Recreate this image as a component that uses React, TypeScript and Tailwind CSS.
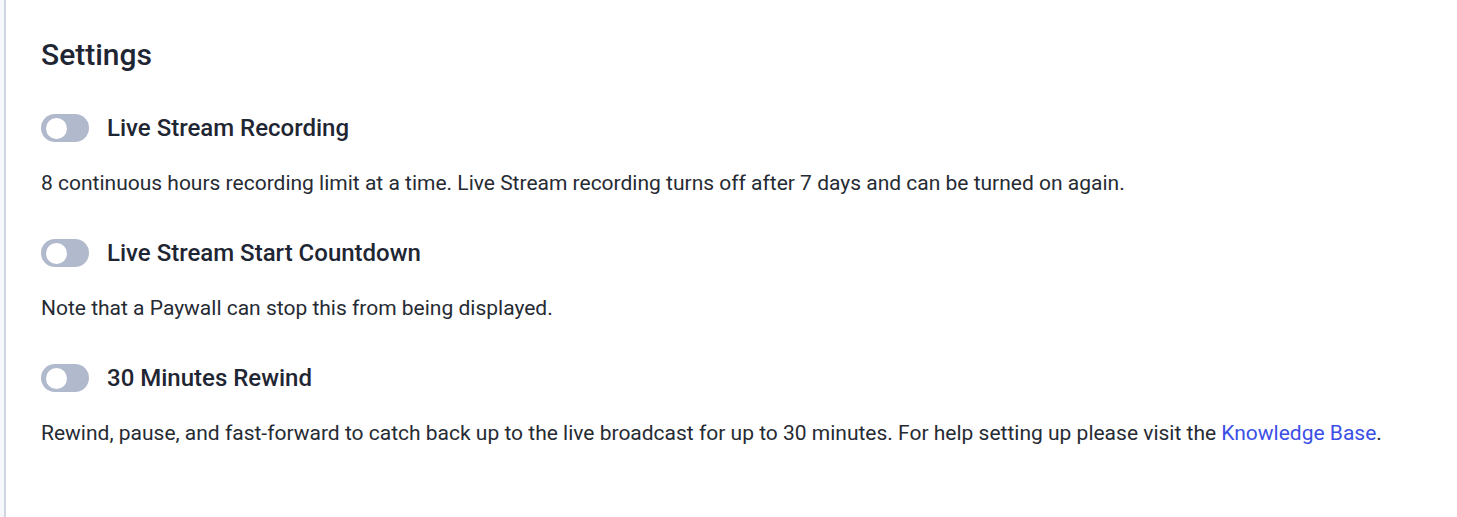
import React from 'react';

// 설정 항목 목록
const settings = [
  {
    title: 'Live Stream Recording',
    description: (
      <>8 continuous hours recording limit at a time. Live Stream recording turns off after 7 days and can be turned on again.</>
    ),
  },
  {
    title: 'Live Stream Start Countdown',
    description: <>Note that a Paywall can stop this from being displayed.</>,
  },
  {
    title: '30 Minutes Rewind',
    description: (
      <>
        Rewind, pause, and fast-forward to catch back up to the live broadcast for up to 30 minutes. For help setting up please visit the{' '}
        <a href="#" className="text-[#3b4fe6]">Knowledge Base</a>.
      </>
    ),
  },
];

function Toggle() {
  return (
    <button type="button" className="flex h-7 w-12 shrink-0 items-center rounded-full bg-[#b1bacd] px-[5px]">
      <span className="h-[21px] w-[21px] rounded-full bg-white" />
    </button>
  );
}

export default function App() {
  return (
    <div className="flex min-h-[517px] w-full bg-white font-['Roboto',sans-serif] text-[#1f2633]">
      <div className="w-[4px] bg-[#f5f7fa]" />
      <div className="w-[2px] bg-[#cfd6e1]" />

      <div className="flex-1 pl-[35px] pt-[37px]">
        <h1 className="text-[30px] font-medium leading-[36px]">Settings</h1>

        <div className="mt-[40px] flex flex-col gap-[41px]">
          {settings.map(s => (
            <section key={s.title}>
              <div className="flex h-[30px] items-center gap-[18px]">
                <Toggle />
                <h2 className="text-[24px] font-medium leading-[30px]">{s.title}</h2>
              </div>
              <p className="mt-[26px] text-[21px] leading-[28px] text-[#262b33]">{s.description}</p>
            </section>
          ))}
        </div>
      </div>
    </div>
  );
}
